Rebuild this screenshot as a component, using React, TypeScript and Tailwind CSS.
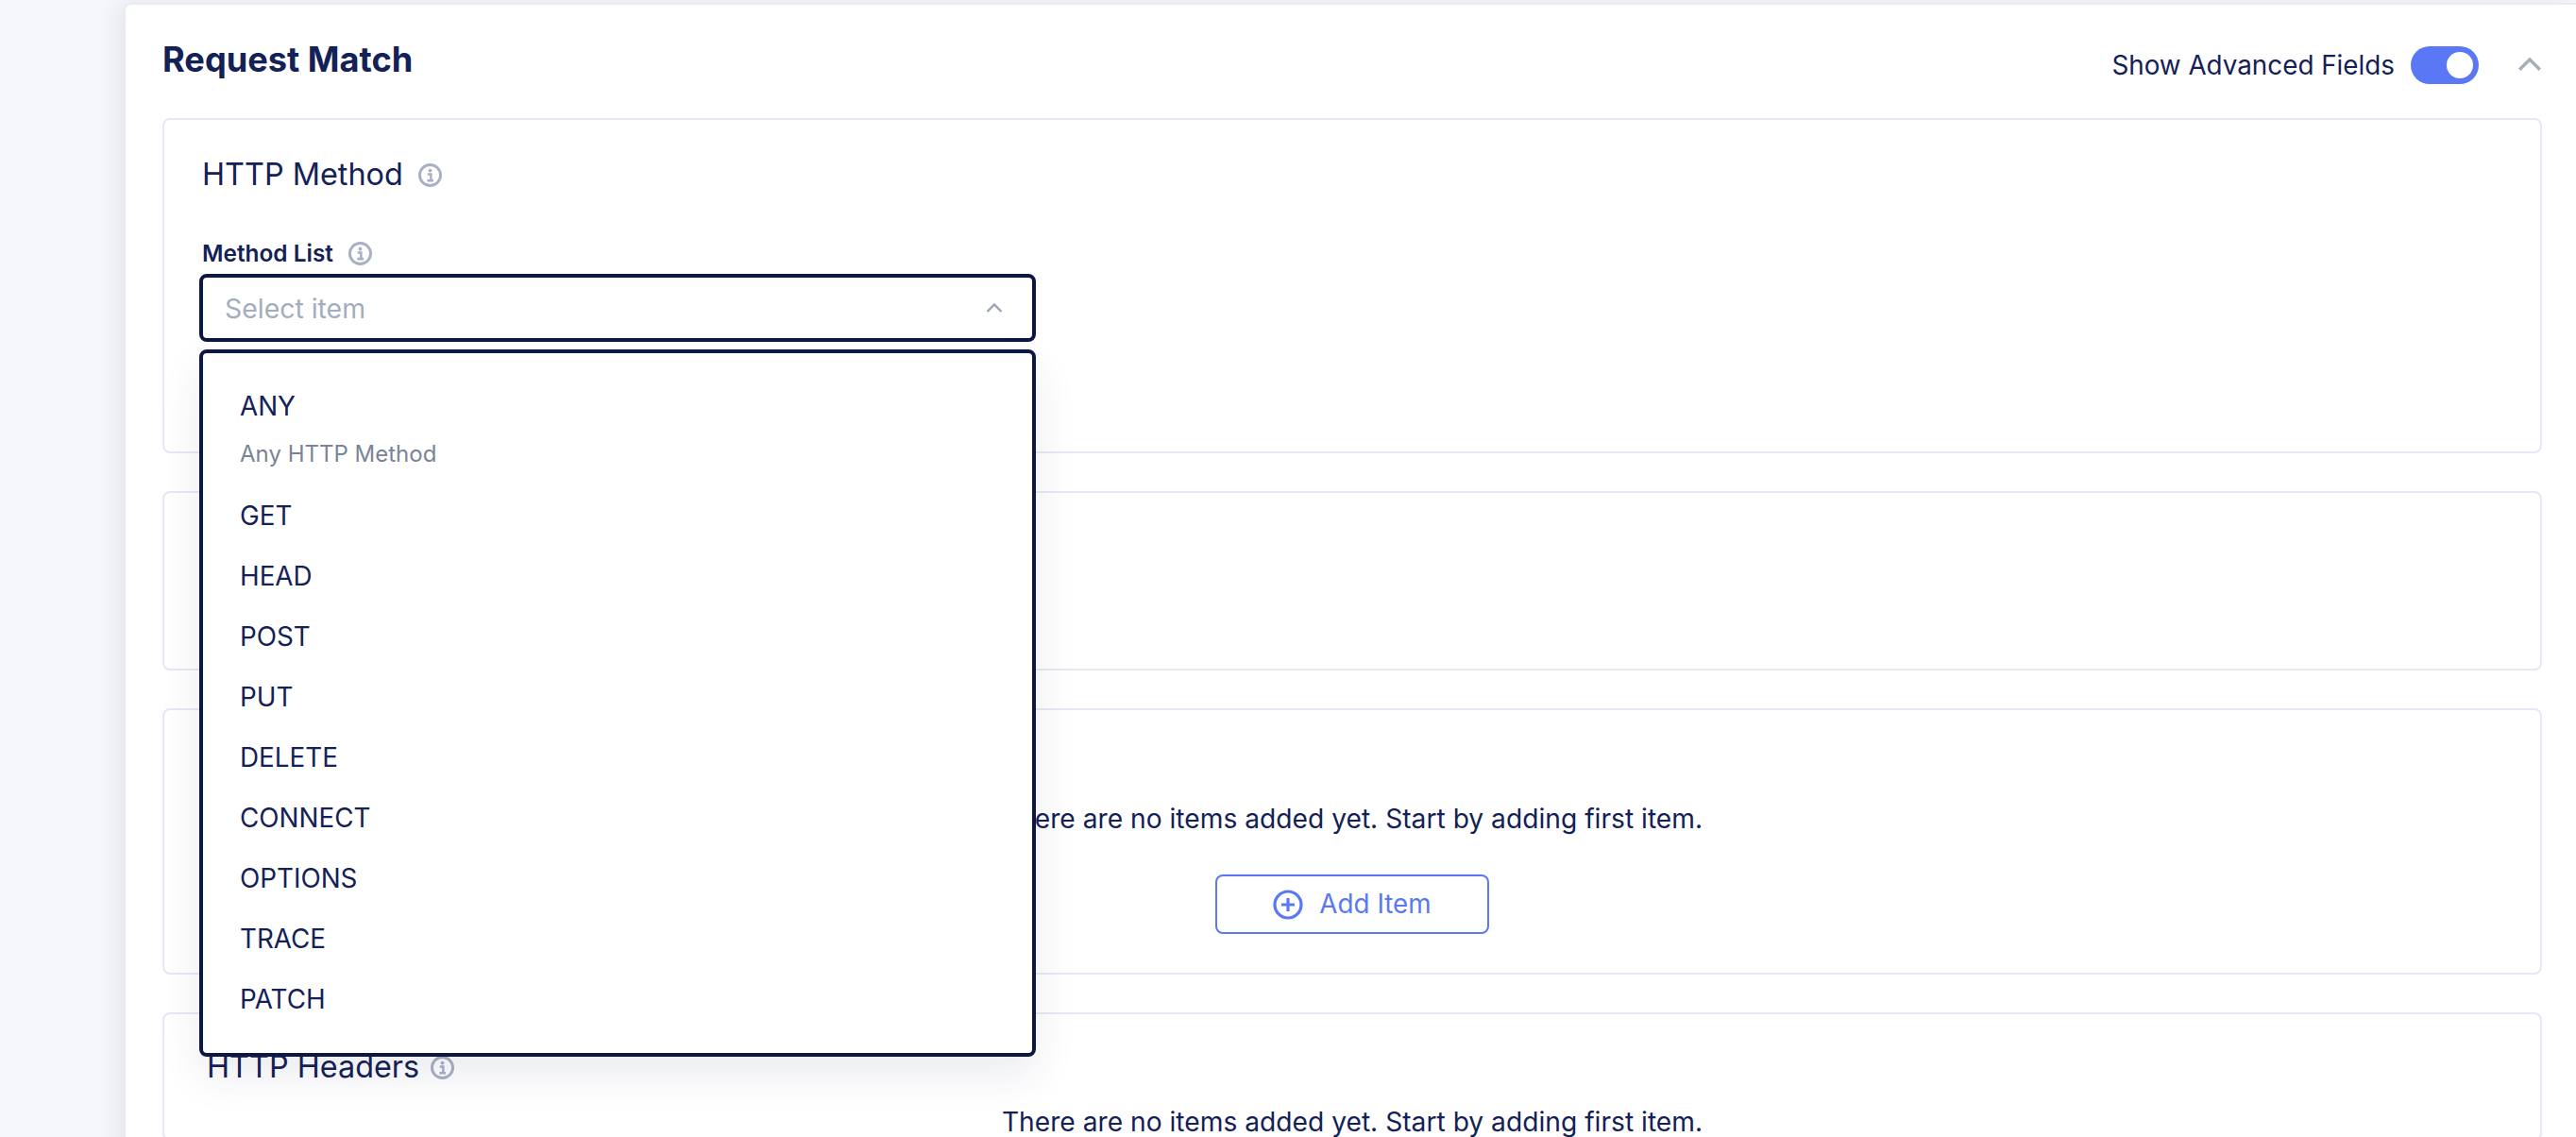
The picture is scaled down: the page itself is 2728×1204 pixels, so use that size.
const methods = ["GET", "HEAD", "POST", "PUT", "DELETE", "CONNECT", "OPTIONS", "TRACE", "PATCH"]

function InfoIcon({ className }: { className?: string }) {
  return (
    <svg viewBox="0 0 24 24" fill="none" className={className}>
      <circle cx="12" cy="12" r="10.6" stroke="#a9b0c4" strokeWidth="2.8" />
      <circle cx="12" cy="7.2" r="1.8" fill="#a9b0c4" />
      <path d="M9.4 11h3.4v6.4M9 17.4h6.4" stroke="#a9b0c4" strokeWidth="2.4" />
    </svg>
  )
}

function EmptyMessage() {
  return <p className="text-center text-[28.2px] leading-[36px] text-[#142156]">There are no items added yet. Start by adding first item.</p>
}

function MethodDropdown() {
  return (
    <div className="absolute left-0 top-[80px] z-10 h-[749px] w-[886px] rounded-[8px] border-4 border-[#0c1843] bg-white pt-[25px] shadow-[0_20px_45px_rgba(30,40,90,0.09)]">
      <div className="px-[39px]">
        <div className="flex h-[64px] items-center text-[27.8px] text-[#142156]">ANY</div>
        <div className="mb-[16px] flex h-[36px] items-center text-[24px] text-[#7b8398]">Any HTTP Method</div>
        {methods.map((method) => (
          <div key={method} className="flex h-[64px] items-center text-[27.8px] text-[#142156]">
            {method}
          </div>
        ))}
      </div>
    </div>
  )
}

export default function App() {
  return (
    <div className="h-[1204px] overflow-hidden bg-[#f6f7fa] pl-[131px] pt-[3px] font-['Inter',sans-serif]">
      <div className="h-[1300px] rounded-tl-[8px] border-l-2 border-t-2 border-[#e9ebf4] bg-white pl-[39px] pr-[36px] shadow-[-6px_0_24px_rgba(30,40,90,0.08)]">
        <div className="flex h-[120px] justify-between">
          <h1 className="mt-[36px] text-[36.2px] font-bold leading-[44px] text-[#142156]">Request Match</h1>
          <div className="mt-[44px] flex h-[40px] items-center">
            <span className="pt-[2px] text-[27.8px] text-[#142156]">Show Advanced Fields</span>
            <div className="ml-[17px] flex h-[40px] w-[72px] items-center justify-end rounded-full bg-[#5a78f5] pr-[6px]">
              <div className="h-[28px] w-[28px] rounded-full bg-white" />
            </div>
            <svg viewBox="0 0 24 14" fill="none" className="mb-[3px] ml-[42px] mr-[1px] h-[14px] w-[24px]">
              <path d="M1.2 12.8 12 2l10.8 10.8" stroke="#a6aeba" strokeWidth="3.4" />
            </svg>
          </div>
        </div>

        <div className="flex flex-col gap-[40px]">
          <section className="h-[355px] rounded-[8px] border-2 border-[#e6e8f3] pl-[37px] pt-[38px]">
            <div className="ml-[3px] flex h-[40px] items-center">
              <h2 className="text-[32.4px] text-[#142156]">HTTP Method</h2>
              <InfoIcon className="ml-[16px] h-[25px] w-[25px]" />
            </div>
            <div className="ml-[3px] mt-[48px] flex h-[30px] items-center">
              <label className="text-[24.4px] font-semibold text-[#142156]">Method List</label>
              <InfoIcon className="ml-[16px] h-[25px] w-[25px]" />
            </div>
            <div className="relative mt-[7px] w-[886px]">
              <div className="flex h-[72px] items-center justify-between rounded-[8px] border-4 border-[#0c1843] bg-white pl-[23px] pr-[31px]">
                <span className="pt-[2px] text-[28.4px] text-[#a3adc0]">Select item</span>
                <svg viewBox="0 0 18 10" fill="none" className="h-[10px] w-[18px]">
                  <path d="M1.5 9 9 1.5 16.5 9" stroke="#9aa2b3" strokeWidth="2.4" />
                </svg>
              </div>
              <MethodDropdown />
            </div>
          </section>

          <section className="h-[190px] rounded-[8px] border-2 border-[#e6e8f3]" />

          <section className="flex h-[282px] flex-col items-center rounded-[8px] border-2 border-[#e6e8f3] pt-[97px]">
            <EmptyMessage />
            <button className="mt-[41px] flex h-[63px] w-[290px] items-center justify-center gap-[17px] rounded-[8px] border-2 border-[#5a78f5] text-[27.8px] text-[#5a78f5]">
              <svg viewBox="0 0 32 32" fill="none" className="h-[32px] w-[32px]">
                <circle cx="16" cy="16" r="14" stroke="#5a78f5" strokeWidth="3.2" />
                <path d="M16 9v14M9 16h14" stroke="#5a78f5" strokeWidth="3.2" />
              </svg>
              Add Item
            </button>
          </section>

          <section className="rounded-[8px] border-2 border-[#e6e8f3] pt-[36px]">
            <div className="flex h-[40px] items-center pl-[45px]">
              <h2 className="text-[32.4px] text-[#142156]">HTTP Headers</h2>
              <InfoIcon className="ml-[12px] h-[25px] w-[25px]" />
            </div>
            <div className="mt-[20px]">
              <EmptyMessage />
            </div>
          </section>
        </div>
      </div>
    </div>
  )
}
